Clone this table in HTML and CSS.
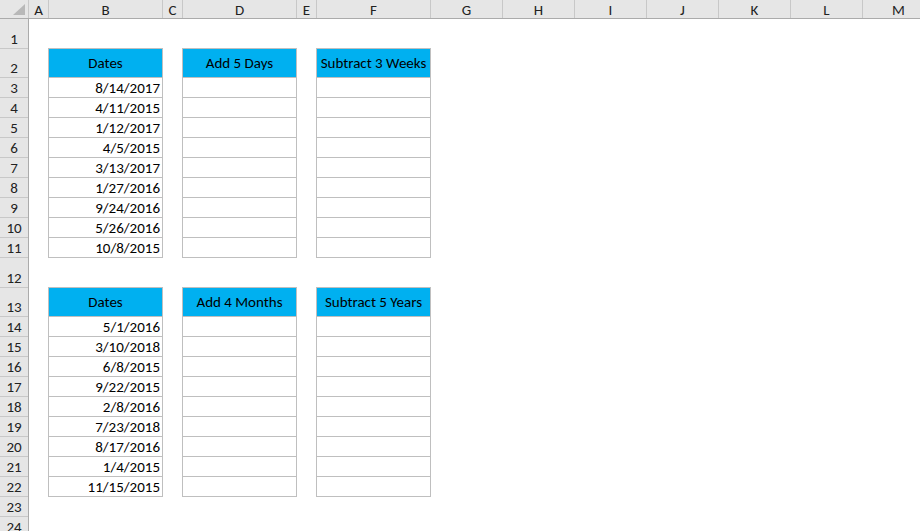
FILE: index.html
```html
<!DOCTYPE html>
<html>
<head>
<meta charset="utf-8">
<link rel="stylesheet" href="styles.css">
</head>
<body>
<div class="sheet">
  <div class="colhead">
    <div class="corner"><svg width="12" height="11" viewBox="0 0 12 11"><polygon points="12,0 12,11 0,11" fill="#b8b8b8"/></svg></div>
    <div class="ch cw-s">A</div>
    <div class="ch cw-b">B</div>
    <div class="ch cw-s">C</div>
    <div class="ch cw-b">D</div>
    <div class="ch cw-s">E</div>
    <div class="ch cw-b">F</div>
    <div class="ch cw-m">G</div>
    <div class="ch cw-m">H</div>
    <div class="ch cw-m">I</div>
    <div class="ch cw-m">J</div>
    <div class="ch cw-m">K</div>
    <div class="ch cw-m">L</div>
    <div class="ch cw-m">M</div>
  </div>
  <div class="body">
    <div class="rowheads">
      <div class="rh r30">1</div>
      <div class="rh r29">2</div>
      <div class="rh">3</div>
      <div class="rh">4</div>
      <div class="rh">5</div>
      <div class="rh">6</div>
      <div class="rh">7</div>
      <div class="rh">8</div>
      <div class="rh">9</div>
      <div class="rh">10</div>
      <div class="rh">11</div>
      <div class="rh r30">12</div>
      <div class="rh r29">13</div>
      <div class="rh">14</div>
      <div class="rh">15</div>
      <div class="rh">16</div>
      <div class="rh">17</div>
      <div class="rh">18</div>
      <div class="rh">19</div>
      <div class="rh">20</div>
      <div class="rh">21</div>
      <div class="rh">22</div>
      <div class="rh">23</div>
      <div class="rh">24</div>
    </div>
    <div class="grid">
      <div class="block col-b rows-top">
        <div class="hd">Dates</div>
        <div class="cell">8/14/2017</div>
        <div class="cell">4/11/2015</div>
        <div class="cell">1/12/2017</div>
        <div class="cell">4/5/2015</div>
        <div class="cell">3/13/2017</div>
        <div class="cell">1/27/2016</div>
        <div class="cell">9/24/2016</div>
        <div class="cell">5/26/2016</div>
        <div class="cell">10/8/2015</div>
      </div>
      <div class="block col-d rows-top">
        <div class="hd">Add 5 Days</div>
        <div class="cell"></div><div class="cell"></div><div class="cell"></div>
        <div class="cell"></div><div class="cell"></div><div class="cell"></div>
        <div class="cell"></div><div class="cell"></div><div class="cell"></div>
      </div>
      <div class="block col-f rows-top">
        <div class="hd">Subtract 3 Weeks</div>
        <div class="cell"></div><div class="cell"></div><div class="cell"></div>
        <div class="cell"></div><div class="cell"></div><div class="cell"></div>
        <div class="cell"></div><div class="cell"></div><div class="cell"></div>
      </div>
      <div class="block col-b rows-bot">
        <div class="hd">Dates</div>
        <div class="cell">5/1/2016</div>
        <div class="cell">3/10/2018</div>
        <div class="cell">6/8/2015</div>
        <div class="cell">9/22/2015</div>
        <div class="cell">2/8/2016</div>
        <div class="cell">7/23/2018</div>
        <div class="cell">8/17/2016</div>
        <div class="cell">1/4/2015</div>
        <div class="cell">11/15/2015</div>
      </div>
      <div class="block col-d rows-bot">
        <div class="hd">Add 4 Months</div>
        <div class="cell"></div><div class="cell"></div><div class="cell"></div>
        <div class="cell"></div><div class="cell"></div><div class="cell"></div>
        <div class="cell"></div><div class="cell"></div><div class="cell"></div>
      </div>
      <div class="block col-f rows-bot">
        <div class="hd">Subtract 5 Years</div>
        <div class="cell"></div><div class="cell"></div><div class="cell"></div>
        <div class="cell"></div><div class="cell"></div><div class="cell"></div>
        <div class="cell"></div><div class="cell"></div><div class="cell"></div>
      </div>
    </div>
  </div>
</div>
</body>
</html>
```

FILE: styles.css
```css
html, body {
  margin: 0;
  padding: 0;
  background: #ffffff;
  overflow: hidden;
}
.sheet {
  width: 920px;
  height: 531px;
  overflow: hidden;
  font-family: "Carlito", "Lato", "Liberation Sans", sans-serif;
  font-size: 15px;
  color: #000;
}
.colhead {
  display: flex;
  height: 18px;
  background: #e6e6e6;
  border-bottom: 1px solid #ababab;
  white-space: nowrap;
}
.corner {
  flex: none;
  width: 29px;
  border-right: 1px solid #c8c8c8;
  display: flex;
  align-items: flex-start;
  justify-content: flex-end;
  padding: 4px 3px 0 0;
  box-sizing: border-box;
}
.ch {
  flex: none;
  box-sizing: border-box;
  border-right: 1px solid #c8c8c8;
  text-align: center;
  line-height: 20px;
  color: #222;
}
.cw-s { width: 20px; }
.cw-b { width: 114px; }
.cw-m { width: 72px; }
.body {
  display: flex;
}
.rowheads {
  flex: none;
  width: 28px;
  background: #e6e6e6;
  border-right: 1px solid #ababab;
  display: flex;
  flex-direction: column;
}
.rh {
  box-sizing: border-box;
  height: 20px;
  border-bottom: 1px solid #c8c8c8;
  display: flex;
  align-items: flex-end;
  justify-content: center;
  line-height: 17px;
  color: #222;
}
.rh.r30 { height: 30px; }
.rh.r29 { height: 29px; }
.grid {
  flex: 1;
  display: grid;
  grid-template-columns: 20px 114px 20px 114px 20px 114px 1fr;
  grid-template-rows: 30px 29px repeat(9, 20px) 30px 29px repeat(9, 20px) 20px 20px;
}
.block {
  margin: -1px 0 0 -1px;
  border-left: 1px solid #bfbfbf;
  border-top: 1px solid #bfbfbf;
  display: flex;
  flex-direction: column;
}
.col-b { grid-column: 2; }
.col-d { grid-column: 4; }
.col-f { grid-column: 6; }
.rows-top { grid-row: 2 / span 10; }
.rows-bot { grid-row: 13 / span 10; }
.hd {
  box-sizing: border-box;
  height: 29px;
  background: #00b0f0;
  border-right: 1px solid #bfbfbf;
  border-bottom: 1px solid #bfbfbf;
  display: flex;
  align-items: center;
  justify-content: center;
  white-space: nowrap;
}
.cell {
  box-sizing: border-box;
  height: 20px;
  border-right: 1px solid #bfbfbf;
  border-bottom: 1px solid #bfbfbf;
  display: flex;
  align-items: flex-end;
  justify-content: flex-end;
  padding-right: 2px;
  line-height: 18px;
}
```
